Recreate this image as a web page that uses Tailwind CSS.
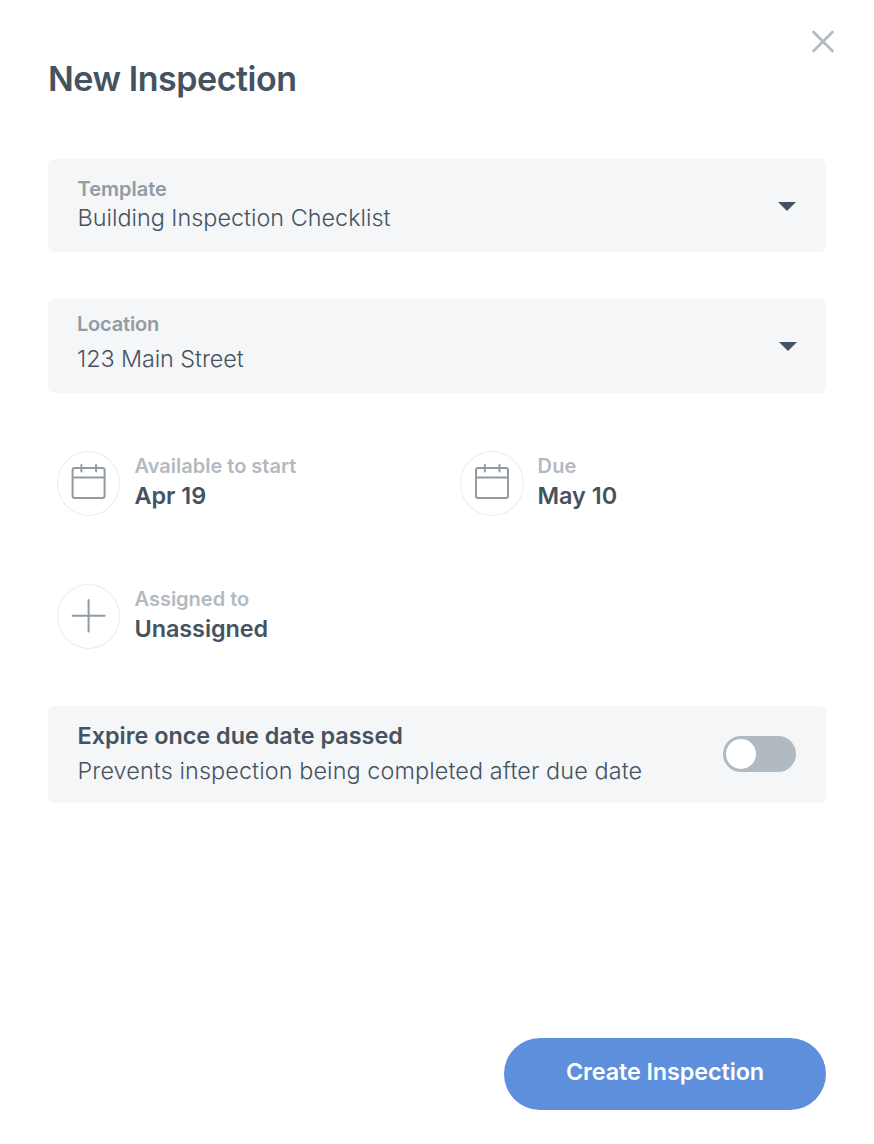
<!DOCTYPE html>
<html lang="en">
<head>
  <meta charset="UTF-8" />
  <meta name="viewport" content="width=device-width, initial-scale=1" />
  <title>New Inspection</title>
  <script src="https://cdn.jsdelivr.net/npm/@tailwindcss/browser@4"></script>
</head>
<body class="bg-white font-['Inter','Lato',sans-serif] text-[#455361]">

  <main class="flex flex-col w-full h-[1144px] px-12 pb-[34px]">

    <!-- Header -->
    <header class="flex items-start justify-between pt-[29px] h-[159px]">
      <h1 class="mt-7 text-[34px] leading-[44px] font-semibold tracking-[-0.45px] whitespace-nowrap">New Inspection</h1>
      <button aria-label="Close" class="-mr-[9px]">
        <svg class="block w-6 h-6" viewBox="0 0 24 24" fill="none" stroke="#b2bac1" stroke-width="2.6" stroke-linecap="round">
          <path d="M2.5 3 21.5 22M21.5 3 2.5 22" />
        </svg>
      </button>
    </header>

    <!-- Template -->
    <section class="flex items-center justify-between h-[93px] pl-[29.5px] pr-[30px] rounded-md bg-[#f4f6f8]">
      <div class="-mt-[3px] whitespace-nowrap">
        <p class="text-[20px] leading-[29px] font-semibold text-[#919ba3]">Template</p>
        <p class="-mt-px mb-px text-[23.4px] leading-[29px] font-light">Building Inspection Checklist</p>
      </div>
      <svg class="w-[18px] h-[9px] mt-px" viewBox="0 0 18 9" fill="#455361"><path d="M0 0h18L9 9z" /></svg>
    </section>

    <!-- Location -->
    <section class="flex items-center justify-between h-[94px] mt-[47px] px-[29px] rounded-md bg-[#f4f6f8]">
      <div class="-mt-[9px] whitespace-nowrap">
        <p class="text-[20px] leading-[35px] font-semibold tracking-[-0.2px] text-[#919ba3]">Location</p>
        <p class="-mt-px mb-px text-[23.4px] leading-[35px] font-light tracking-[-0.08px]">123 Main Street</p>
      </div>
      <svg class="w-[18px] h-[9px]" viewBox="0 0 18 9" fill="#455361"><path d="M0 0h18L9 9z" /></svg>
    </section>

    <!-- Dates -->
    <div class="flex mt-[58px] pl-[9px]">
      <div class="flex w-[403px]">
        <div class="flex items-center justify-center w-[63px] h-[65px] rounded-[50%] border border-[#ececee]">
          <svg class="w-9 h-9 -mt-[3px]" viewBox="0 0 36 36" fill="none" stroke="#919ba3" stroke-width="2" stroke-linecap="round">
            <rect x="1.6" y="4" width="32" height="30" rx="2.2" />
            <path d="M1.6 13.5h32M10.4 1v6.5M25.1 1v6.5" />
          </svg>
        </div>
        <div class="ml-[14.5px] whitespace-nowrap">
          <p class="text-[20px] leading-[30px] font-semibold text-[#b2bac1]">Available to start</p>
          <p class="text-[23.4px] leading-[30px] font-semibold">Apr 19</p>
        </div>
      </div>
      <div class="flex">
        <div class="flex items-center justify-center w-[64px] h-[65px] rounded-[50%] border border-[#ececee]">
          <svg class="w-9 h-9 -mt-[3px]" viewBox="0 0 36 36" fill="none" stroke="#919ba3" stroke-width="2" stroke-linecap="round">
            <rect x="2" y="4" width="32" height="30" rx="2.2" />
            <path d="M2 13.5h32M10.8 1v6.5M25.5 1v6.5" />
          </svg>
        </div>
        <div class="ml-[13.5px] whitespace-nowrap">
          <p class="text-[20px] leading-[30px] font-semibold tracking-[0.2px] text-[#b2bac1]">Due</p>
          <p class="text-[23.4px] leading-[30px] font-semibold">May 10</p>
        </div>
      </div>
    </div>

    <!-- Assignee -->
    <div class="flex mt-[68px] pl-[9px]">
      <div class="flex items-center justify-center w-[63px] h-[65px] rounded-[50%] border border-[#ececee]">
        <svg class="w-9 h-9" viewBox="0 0 36 36" fill="none" stroke="#919ba3" stroke-width="2" stroke-linecap="round">
          <path d="M1.6 16.8h32M17.6 1v31.6" />
        </svg>
      </div>
      <div class="ml-[14.5px] whitespace-nowrap">
        <p class="text-[20px] leading-[30px] font-semibold text-[#b2bac1]">Assigned to</p>
        <p class="text-[23.4px] leading-[30px] font-semibold tracking-[-0.05px]">Unassigned</p>
      </div>
    </div>

    <!-- Expiry toggle -->
    <section class="flex items-center justify-between h-[97px] mt-[57px] pl-[29.5px] pr-[30px] rounded-md bg-[#f4f6f8]">
      <div class="-mt-[3px] whitespace-nowrap">
        <p class="text-[23.4px] leading-[35px] font-semibold">Expire once due date passed</p>
        <p class="text-[23.4px] leading-[35px] font-light tracking-[0.1px]">Prevents inspection being completed after due date</p>
      </div>
      <button role="switch" aria-checked="false" aria-label="Expire once due date passed" class="flex items-center w-[73px] h-9 -mt-px p-[3px] rounded-full bg-[#b2bac1]">
        <span class="w-[30px] h-[30px] rounded-full bg-white"></span>
      </button>
    </section>

    <button class="mt-auto self-end w-[322px] h-[72px] pb-1 rounded-full bg-[#5d8fdc] text-white text-[23.4px] font-semibold tracking-[-0.1px] whitespace-nowrap">Create Inspection</button>
  </main>

</body>
</html>
